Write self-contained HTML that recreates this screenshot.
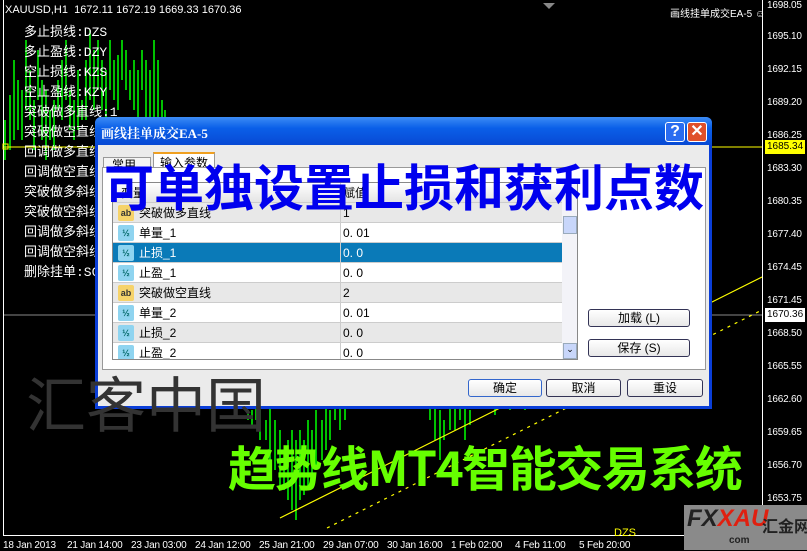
<!DOCTYPE html>
<html><head><meta charset="utf-8"><style>
*{margin:0;padding:0;box-sizing:border-box}
body{width:807px;height:550px;background:#000;position:relative;overflow:hidden;font-family:"Liberation Sans","Noto Sans CJK SC",sans-serif}
.a{position:absolute;white-space:nowrap}
.pl{position:absolute;left:767px;color:#fff;font-size:10px;letter-spacing:-0.2px;font-family:"Liberation Sans",sans-serif}
.tl{position:absolute;top:540px;color:#fff;font-size:10px;letter-spacing:-0.2px}
.lt{position:absolute;left:24px;color:#fff;font-size:13px;font-family:"Liberation Mono","Noto Sans CJK SC",monospace}
.row{position:absolute;left:0;width:450px;height:20px;font-size:12px;border-bottom:1px solid #ccc}
.row .ic{position:absolute;left:5px;top:2px;width:16px;height:16px;border-radius:2px;font-size:9px;line-height:16px;text-align:center;font-weight:bold}
.row .n{position:absolute;left:26px;top:2px;line-height:16px}
.row .v{position:absolute;left:230px;top:2px;line-height:16px}
.row .d{position:absolute;left:227px;top:0;width:1px;height:20px;background:#ccc}
.btn{position:absolute;height:18px;border:1px solid #335;border-radius:3px;background:linear-gradient(#fff,#e8e8e8);font-size:12px;text-align:center;line-height:16px;color:#000}
</style></head><body>
<div class="a" style="left:3px;top:0;width:1px;height:536px;background:#fff"></div>
<div class="a" style="left:762px;top:0;width:1px;height:536px;background:#fff"></div>
<div class="a" style="left:3px;top:535px;width:760px;height:1px;background:#fff"></div>
<svg class="a" style="left:0;top:0" width="807" height="550">
<g stroke="#00ff00" stroke-width="1.5">
<path d="M5 120V160M10 95V150M14 60V140M18 80V130M22 90V140M26 40V110M30 70V120M34 100V150M38 50V100M42 80V140M46 90V160M50 110V140M54 100V150M58 80V110M62 60V120M66 40V100M70 90V130M74 100V140M78 70V130M82 100V120M86 60V120M90 30V100M94 50V110M98 40V90M102 60V110M106 70V120M110 40V90M114 60V100M118 55V110M122 40V80M126 50V90M130 70V100M134 60V110M138 70V120M142 50V90M146 60V130M150 70V150M154 40V140M158 60V120M162 100V140M165 110V120"/>
<path d="M248 410V420M252 410V425M256 405V420M260 410V440M266 420V440M270 400V460M275 420V470M280 430V490M284 450V490M288 440V500M292 430V510M296 440V520M300 430V500M304 440V495M308 420V490M312 430V480M316 410V470M322 420V460M326 400V450M330 410V440M335 400V420M340 400V430M345 405V420M430 405V420M435 400V440M440 410V460M444 420V440M450 400V430M455 395V430M460 400V420M465 405V440M470 410V425M495 400V415M510 390V410M525 405V410"/>
</g>
<line x1="4" y1="147" x2="762" y2="147" stroke="#ffff00"/>
<rect x="3" y="144" width="5" height="5" fill="none" stroke="#ff0" />
<line x1="4" y1="315" x2="762" y2="315" stroke="#888"/>
<line x1="280" y1="518" x2="762" y2="277" stroke="#ffff00" stroke-width="1.2"/>
<line x1="327" y1="528" x2="762" y2="310" stroke="#ffff00" stroke-width="1.2" stroke-dasharray="3,5"/>
<path d="M543 3l6 6l6-6z" fill="#888"/>
</svg>
<div class="a" style="left:5px;top:4px;color:#fff;font-size:11px">XAUUSD,H1&nbsp; 1672.11 1672.19 1669.33 1670.36</div>
<div class="a" style="left:670px;top:5px;color:#fff;font-size:10px">画线挂单成交EA-5 ☺</div>
<div class="lt" style="top:21px">多止损线:DZS</div>
<div class="lt" style="top:41px">多止盈线:DZY</div>
<div class="lt" style="top:61px">空止损线:KZS</div>
<div class="lt" style="top:81px">空止盈线:KZY</div>
<div class="lt" style="top:101px">突破做多直线:1</div>
<div class="lt" style="top:121px">突破做空直线</div>
<div class="lt" style="top:141px">回调做多直线</div>
<div class="lt" style="top:161px">回调做空直线</div>
<div class="lt" style="top:181px">突破做多斜线</div>
<div class="lt" style="top:201px">突破做空斜线</div>
<div class="lt" style="top:221px">回调做多斜线</div>
<div class="lt" style="top:241px">回调做空斜线</div>
<div class="lt" style="top:261px">删除挂单:SC</div>
<div class="pl" style="top:0">1698.05</div>
<div class="pl" style="top:31px">1695.10</div>
<div class="pl" style="top:64px">1692.15</div>
<div class="pl" style="top:97px">1689.20</div>
<div class="pl" style="top:130px">1686.25</div>
<div class="pl" style="top:163px">1683.30</div>
<div class="pl" style="top:196px">1680.35</div>
<div class="pl" style="top:229px">1677.40</div>
<div class="pl" style="top:262px">1674.45</div>
<div class="pl" style="top:295px">1671.45</div>
<div class="pl" style="top:328px">1668.50</div>
<div class="pl" style="top:361px">1665.55</div>
<div class="pl" style="top:394px">1662.60</div>
<div class="pl" style="top:427px">1659.65</div>
<div class="pl" style="top:460px">1656.70</div>
<div class="pl" style="top:493px">1653.75</div>
<div class="a" style="left:765px;top:140px;width:40px;height:14px;background:#ff0;color:#000;font-size:10px;line-height:14px;padding-left:2px">1685.34</div>
<div class="a" style="left:765px;top:308px;width:40px;height:14px;background:#fff;color:#000;font-size:10px;line-height:14px;padding-left:2px">1670.36</div>
<div class="tl" style="left:3px">18 Jan 2013</div>
<div class="tl" style="left:67px">21 Jan 14:00</div>
<div class="tl" style="left:131px">23 Jan 03:00</div>
<div class="tl" style="left:195px">24 Jan 12:00</div>
<div class="tl" style="left:259px">25 Jan 21:00</div>
<div class="tl" style="left:323px">29 Jan 07:00</div>
<div class="tl" style="left:387px">30 Jan 16:00</div>
<div class="tl" style="left:451px">1 Feb 02:00</div>
<div class="tl" style="left:515px">4 Feb 11:00</div>
<div class="tl" style="left:579px">5 Feb 20:00</div>
<div class="a" style="left:614px;top:527px;color:#ff0;font-size:11px">DZS</div>
<!-- dialog -->
<div class="a" style="left:95px;top:117px;width:617px;height:292px;background:#0a3ed8;border-radius:6px 6px 0 0"></div>
<div class="a" style="left:95px;top:117px;width:617px;height:28px;background:linear-gradient(#3d8cf5,#0a5fe8 40%,#0849d4);border-radius:6px 6px 0 0"></div>
<div class="a" style="left:101px;top:123px;color:#fff;font-size:13px;font-weight:bold;font-family:'Liberation Serif','Noto Serif CJK SC',serif">画线挂单成交EA-5</div>
<div class="a" style="left:665px;top:122px;width:20px;height:20px;background:#2a6cf0;border:1px solid #fff;border-radius:3px;color:#fff;font-size:16px;font-weight:bold;text-align:center;line-height:18px">?</div>
<div class="a" style="left:687px;top:122px;width:20px;height:20px;background:#e0502a;border:1px solid #fff;border-radius:3px;color:#fff;font-size:16px;font-weight:bold;text-align:center;line-height:18px">✕</div>
<div class="a" style="left:98px;top:145px;width:611px;height:261px;background:#ebebeb"></div>
<div class="a" style="left:103px;top:157px;width:48px;height:10px;background:#f4f4f4;border:1px solid #999;border-bottom:none;font-size:12px;padding-left:8px;line-height:14px">常用</div>
<div class="a" style="left:153px;top:152px;width:62px;height:16px;background:#fff;border:1px solid #999;border-top:2px solid #f0a020;border-bottom:none;font-size:12px;padding-left:6px">输入参数</div>
<div class="a" style="left:102px;top:167px;width:604px;height:203px;background:#fff;border:1px solid #999"></div>
<div class="a" style="left:112px;top:182px;width:466px;height:178px;border:1px solid #888;background:#fff;overflow:hidden">
 <div class="row" style="top:0;background:linear-gradient(#fff,#e4e4e4);height:20px"><span class="n" style="left:8px">变量</span><span class="d"></span><span class="v">赋值</span></div>
 <div class="row" style="top:20px;background:#e8e8e8"><span class="ic" style="background:#f6d36a;color:#333">ab</span><span class="n">突破做多直线</span><span class="d"></span><span class="v">1</span></div>
 <div class="row" style="top:40px"><span class="ic" style="background:#8fd4f0;color:#066">½</span><span class="n">单量_1</span><span class="d"></span><span class="v">0. 01</span></div>
 <div class="row" style="top:60px;background:#0a7ab8;color:#fff"><span class="ic" style="background:#8fd4f0;color:#066">½</span><span class="n">止损_1</span><span class="d"></span><span class="v">0. 0</span></div>
 <div class="row" style="top:80px"><span class="ic" style="background:#8fd4f0;color:#066">½</span><span class="n">止盈_1</span><span class="d"></span><span class="v">0. 0</span></div>
 <div class="row" style="top:100px;background:#e8e8e8"><span class="ic" style="background:#f6d36a;color:#333">ab</span><span class="n">突破做空直线</span><span class="d"></span><span class="v">2</span></div>
 <div class="row" style="top:120px"><span class="ic" style="background:#8fd4f0;color:#066">½</span><span class="n">单量_2</span><span class="d"></span><span class="v">0. 01</span></div>
 <div class="row" style="top:140px;background:#e8e8e8"><span class="ic" style="background:#8fd4f0;color:#066">½</span><span class="n">止损_2</span><span class="d"></span><span class="v">0. 0</span></div>
 <div class="row" style="top:160px"><span class="ic" style="background:#8fd4f0;color:#066">½</span><span class="n">止盈_2</span><span class="d"></span><span class="v">0. 0</span></div>
 <div class="a" style="left:449px;top:0;width:16px;height:177px;background:#f3f3f8"></div>
 <div class="a" style="left:450px;top:33px;width:14px;height:18px;background:#c8d6fa;border:1px solid #9ab"></div>
 <div class="a" style="left:450px;top:160px;width:14px;height:16px;background:#c8d6fa;border:1px solid #9ab;font-size:9px;text-align:center">⌄</div>
</div>
<div class="btn" style="left:588px;top:309px;width:102px">加载 (L)</div>
<div class="btn" style="left:588px;top:339px;width:102px">保存 (S)</div>
<div class="btn" style="left:468px;top:379px;width:74px;border-color:#36c">确定</div>
<div class="btn" style="left:546px;top:379px;width:75px">取消</div>
<div class="btn" style="left:627px;top:379px;width:76px">重设</div>
<!-- overlay texts -->
<div class="a" style="left:26px;top:358px;color:#333;font-size:60px;font-family:'Noto Sans CJK SC',sans-serif">汇客中国</div>
<div class="a" style="left:104px;top:152px;color:#0000ee;font-size:50px;font-weight:bold;font-family:'Noto Sans CJK SC',sans-serif;line-height:66px">可单独设置止损和获利点数</div>
<div class="a" style="left:228px;top:433px;color:#66ff00;font-size:48px;font-weight:bold;font-family:'Noto Sans CJK SC',sans-serif;line-height:64px;letter-spacing:-1.5px">趋势线MT4智能交易系统</div>
<!-- logo -->
<div class="a" style="left:684px;top:505px;width:123px;height:45px;background:#8a8a8a"></div>
<div class="a" style="left:687px;top:505px;color:#222;font-size:24px;font-weight:bold;font-style:italic">FX<span style="color:#e02010">XAU</span></div>
<div class="a" style="left:762px;top:513px;color:#222;font-size:16px;font-weight:bold">汇金网</div>
<div class="a" style="left:729px;top:535px;color:#222;font-size:10px;font-weight:bold">com</div>
</body></html>
